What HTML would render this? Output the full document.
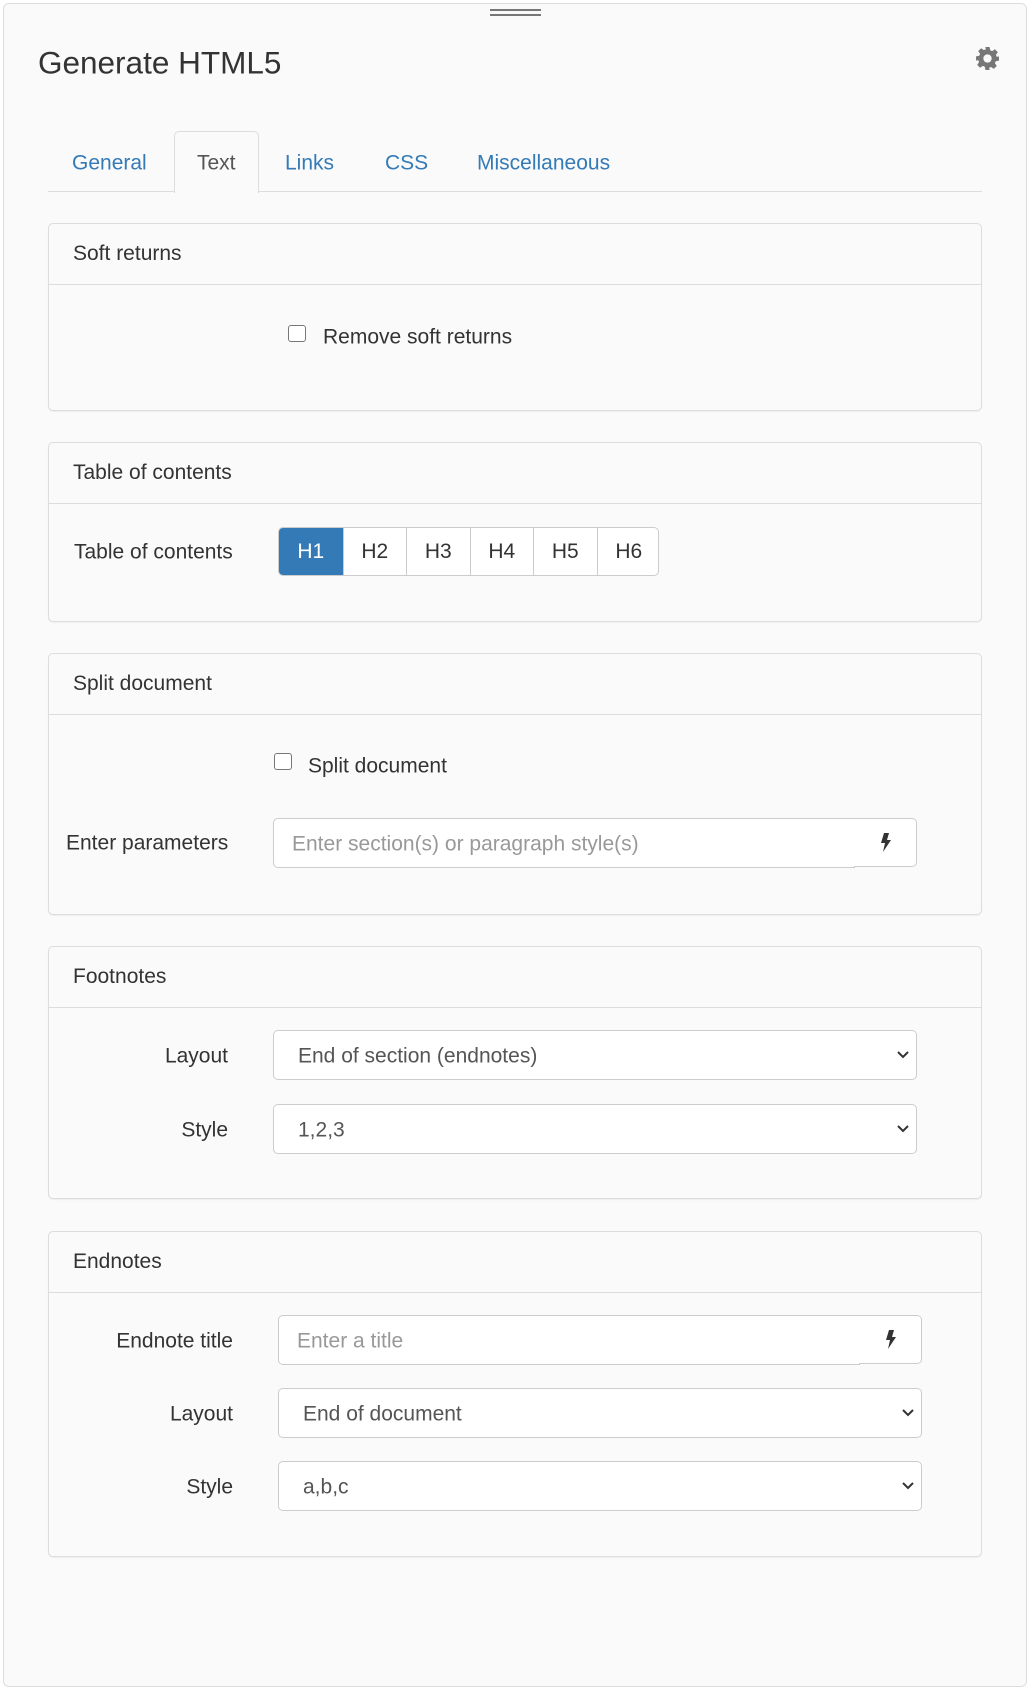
<!DOCTYPE html>
<html><head><meta charset="utf-8"><style>
*{box-sizing:border-box;margin:0;padding:0}
body{width:1029px;height:1691px;background:#fff;font-family:"Liberation Sans",Arial,sans-serif;color:#333;font-size:21px;position:relative;overflow:hidden}
.a{position:absolute}
.frame{left:3px;top:3px;width:1024px;height:1684px;border:1px solid #ddd;border-radius:6px;background:#fafafa}
.panel{position:absolute;left:48px;width:934px;border:1px solid #ddd;border-radius:5px;background:#fafafa;box-shadow:0 1px 1px rgba(0,0,0,.05)}
.ph{position:absolute;left:0;right:0;top:0;border-bottom:1px solid #ddd}
.ph span{position:absolute;left:24px;top:50%;transform:translateY(-50%);white-space:nowrap}
.t{position:absolute;white-space:nowrap;line-height:1;transform:translateY(-50%)}
.r{text-align:right}
.inp{position:absolute;background:#fff;border:1px solid #ccc;border-radius:5px;color:#999}
.sel{position:absolute;background:#fff;border:1px solid #ccc;border-radius:5px;color:#555}
.chev{position:absolute;right:6px;top:50%;transform:translateY(-50%)}
.cb{position:absolute;width:18px;height:17px;border:1.5px solid #777;border-radius:3px;background:#fff}
.tab{position:absolute;color:#337ab7;transform:translateY(-50%);line-height:1}
.hb{position:absolute;top:0;height:100%;border-left:1px solid #ccc;display:flex;align-items:center;justify-content:center;width:63.5px}
</style></head><body>
<div class="a frame"></div>
<div class="a" style="left:490px;top:9px;width:51px;height:2px;background:#777"></div>
<div class="a" style="left:490px;top:14px;width:51px;height:2px;background:#777"></div>
<div class="t" style="left:38px;top:63px;font-size:31.5px;color:#333">Generate HTML5</div>
<svg class="a" style="left:975px;top:46px" width="25" height="25" viewBox="0 0 24 24"><path fill="#777" d="M10 1h4l.6 3.1 1.9.8 2.6-1.8 2.8 2.8-1.8 2.6.8 1.9L23 10v4l-3.1.6-.8 1.9 1.8 2.6-2.8 2.8-2.6-1.8-1.9.8L14 23h-4l-.6-3.1-1.9-.8-2.6 1.8-2.8-2.8 1.8-2.6-.8-1.9L1 14v-4l3.1-.6.8-1.9-1.8-2.6 2.8-2.8 2.6 1.8 1.9-.8z M12 8a4 4 0 1 0 0 8 4 4 0 1 0 0-8z" fill-rule="evenodd"/></svg>

<div class="a" style="left:48px;top:191px;width:934px;height:1px;background:#ddd"></div>
<div class="a" style="left:174px;top:131px;width:85px;height:62px;border:1px solid #ddd;border-bottom:none;border-radius:5px 5px 0 0;background:#fafafa"></div>
<div class="tab" style="left:72px;top:163px">General</div>
<div class="tab" style="left:197px;top:163px;color:#555">Text</div>
<div class="tab" style="left:285px;top:163px">Links</div>
<div class="tab" style="left:385px;top:163px">CSS</div>
<div class="tab" style="left:477px;top:163px">Miscellaneous</div>

<div class="panel" style="top:223px;height:188px"><div class="ph" style="height:61px"><span>Soft returns</span></div></div>
<div class="cb" style="left:288px;top:325px"></div>
<div class="t" style="left:323px;top:337px">Remove soft returns</div>

<div class="panel" style="top:442px;height:180px"><div class="ph" style="height:61px"><span>Table of contents</span></div></div>
<div class="t" style="left:74px;top:552px">Table of contents</div>
<div class="a" style="left:278px;top:527px;width:381px;height:49px;border:1px solid #ccc;border-radius:5px;background:#fff;overflow:hidden">
<div class="hb" style="left:0;border-left:none;background:#337ab7;color:#fff">H1</div>
<div class="hb" style="left:63.5px">H2</div>
<div class="hb" style="left:127px">H3</div>
<div class="hb" style="left:190.5px">H4</div>
<div class="hb" style="left:254px">H5</div>
<div class="hb" style="left:317.5px">H6</div>
</div>

<div class="panel" style="top:653px;height:262px"><div class="ph" style="height:61px"><span>Split document</span></div></div>
<div class="cb" style="left:274px;top:753px"></div>
<div class="t" style="left:308px;top:766px">Split document</div>
<div class="t" style="left:66px;top:843px">Enter parameters</div>
<div class="inp" style="left:273px;top:818px;width:582px;height:50px;border-radius:5px 0 0 5px"><div class="t" style="left:18px;top:25px">Enter section(s) or paragraph style(s)</div></div>
<div class="inp" style="left:854px;top:818px;width:63px;height:49px;border-radius:0 5px 5px 0;border-left:none"></div>
<svg class="a" style="left:880px;top:833px" width="12" height="19" viewBox="0 0 12 19"><path fill="#333" d="M4 0h5L7 7h4L3 19l2-9H1z"/></svg>

<div class="panel" style="top:946px;height:253px"><div class="ph" style="height:61px"><span>Footnotes</span></div></div>
<div class="t r" style="right:801px;top:1056px">Layout</div>
<div class="sel" style="left:273px;top:1030px;width:644px;height:50px"><div class="t" style="left:24px;top:25px">End of section (endnotes)</div><svg class="chev" width="14" height="10" viewBox="0 0 14 10"><path d="M2 2l5 5 5-5" stroke="#333" stroke-width="2" fill="none"/></svg></div>
<div class="t r" style="right:801px;top:1130px">Style</div>
<div class="sel" style="left:273px;top:1104px;width:644px;height:50px"><div class="t" style="left:24px;top:25px">1,2,3</div><svg class="chev" width="14" height="10" viewBox="0 0 14 10"><path d="M2 2l5 5 5-5" stroke="#333" stroke-width="2" fill="none"/></svg></div>

<div class="panel" style="top:1231px;height:326px"><div class="ph" style="height:61px"><span>Endnotes</span></div></div>
<div class="t r" style="right:796px;top:1341px">Endnote title</div>
<div class="inp" style="left:278px;top:1315px;width:582px;height:50px;border-radius:5px 0 0 5px"><div class="t" style="left:18px;top:25px">Enter a title</div></div>
<div class="inp" style="left:859px;top:1315px;width:63px;height:49px;border-radius:0 5px 5px 0;border-left:none"></div>
<svg class="a" style="left:885px;top:1330px" width="12" height="19" viewBox="0 0 12 19"><path fill="#333" d="M4 0h5L7 7h4L3 19l2-9H1z"/></svg>
<div class="t r" style="right:796px;top:1414px">Layout</div>
<div class="sel" style="left:278px;top:1388px;width:644px;height:50px"><div class="t" style="left:24px;top:25px">End of document</div><svg class="chev" width="14" height="10" viewBox="0 0 14 10"><path d="M2 2l5 5 5-5" stroke="#333" stroke-width="2" fill="none"/></svg></div>
<div class="t r" style="right:796px;top:1487px">Style</div>
<div class="sel" style="left:278px;top:1461px;width:644px;height:50px"><div class="t" style="left:24px;top:25px">a,b,c</div><svg class="chev" width="14" height="10" viewBox="0 0 14 10"><path d="M2 2l5 5 5-5" stroke="#333" stroke-width="2" fill="none"/></svg></div>
</body></html>
